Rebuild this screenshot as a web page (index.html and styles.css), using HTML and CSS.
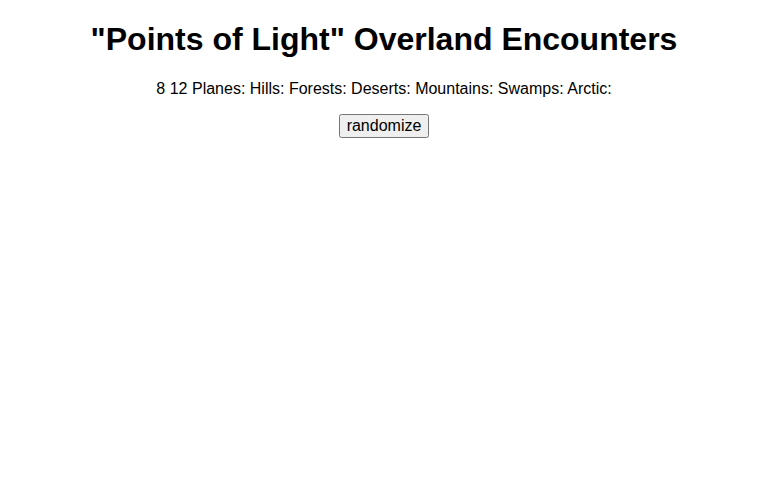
FILE: index.html
```html
<!DOCTYPE html>
<html lang="en">
<head>
    <meta charset="UTF-8">
    <meta name="viewport" content="width=device-width, initial-scale=1.0">
    <title>Points of Light Overland Encounters</title>
    <link rel="stylesheet" href="styles.css">
</head>
<body>
    <div class="page">
        <h1 class="title">"Points of Light" Overland Encounters</h1>
        <p class="results">
            <span id="d8">8</span> <span id="d12">12</span>
            <span class="terrain">Planes: <span id="planes"></span></span>
            <span class="terrain">Hills: <span id="hills"></span></span>
            <span class="terrain">Forests: <span id="forests"></span></span>
            <span class="terrain">Deserts: <span id="deserts"></span></span>
            <span class="terrain">Mountains: <span id="mountains"></span></span>
            <span class="terrain">Swamps: <span id="swamps"></span></span>
            <span class="terrain">Arctic: <span id="arctic"></span></span>
        </p>
        <div class="actions">
            <button class="btn-randomize" type="button">randomize</button>
        </div>
    </div>
</body>
</html>
```

FILE: styles.css
```css
body {
    font-family: "Liberation Sans", Arial, sans-serif;
    color: #000;
    background-color: #fff;
}
.page {
    text-align: center;
}
.title {
    font-size: 32px;
    font-weight: bold;
    margin: 13px 0 22px;
}
.results {
    font-size: 16px;
}
.btn-randomize {
    font-family: "Liberation Sans", Arial, sans-serif;
    font-size: 16px;
}
```
